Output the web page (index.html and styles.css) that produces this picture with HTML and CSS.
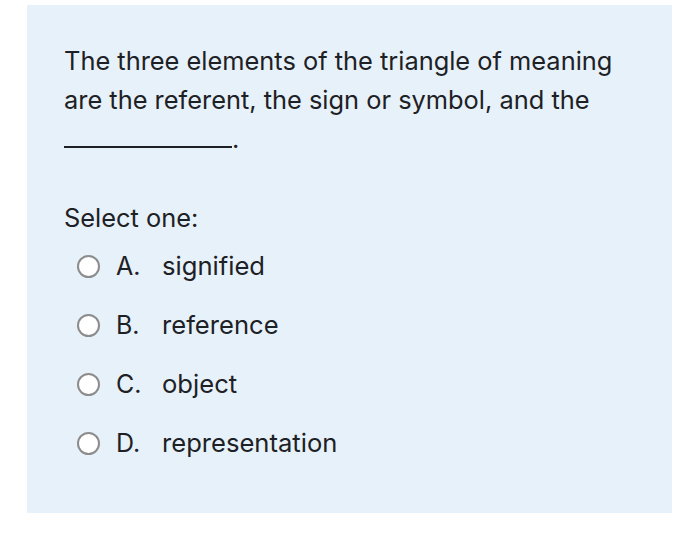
FILE: index.html
```html
<!DOCTYPE html>
<html>
<head>
<meta charset="utf-8">
<link rel="stylesheet" href="styles.css">
</head>
<body>
<div class="card">
  <div class="question">The three elements of the triangle of meaning are the referent, the sign or symbol, and the <span class="blank"></span>.</div>
  <div class="prompt">Select one:</div>
  <div class="options">
    <div class="option"><span class="radio"></span><span class="letter">A.</span><span class="answer">signified</span></div>
    <div class="option"><span class="radio"></span><span class="letter">B.</span><span class="answer">reference</span></div>
    <div class="option"><span class="radio"></span><span class="letter">C.</span><span class="answer">object</span></div>
    <div class="option"><span class="radio"></span><span class="letter">D.</span><span class="answer">representation</span></div>
  </div>
</div>
</body>
</html>
```
FILE: styles.css
```css
html, body {
  margin: 0;
  padding: 0;
  background: #ffffff;
}
body {
  padding: 5px 28px 0 27px;
  font-family: Inter, "Noto Sans", "Liberation Sans", sans-serif;
  color: #1d2125;
}
.card {
  background: #e7f1f9;
  height: 508px;
  box-sizing: border-box;
  padding: 36px 37px 0 37px;
}
.question {
  font-size: 25.4px;
  line-height: 39px;
  width: 570px;
}
.blank {
  display: inline-block;
  width: 168px;
  border-bottom: 2px solid #1d2125;
  height: 27px;
  vertical-align: baseline;
}
.prompt {
  font-size: 25.4px;
  margin-top: 45px;
  line-height: 30px;
}
.options {
  margin-top: 18px;
  display: flex;
  flex-direction: column;
  gap: 29px;
  padding-left: 13px;
}
.option {
  display: flex;
  align-items: center;
  font-size: 25px;
  line-height: 30px;
}
.radio {
  width: 19px;
  height: 19px;
  border: 2.5px solid #8c8c8c;
  border-radius: 50%;
  background: #ffffff;
  margin-right: 16px;
}
.letter {
  width: 46px;
}
.answer {
  font-size: 25.6px;
}
```
